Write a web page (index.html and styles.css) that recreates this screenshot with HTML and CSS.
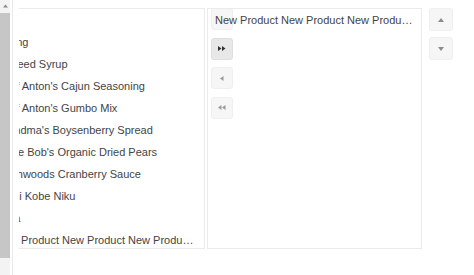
FILE: index.html
```html
<!DOCTYPE html>
<html>
<head>
<meta charset="utf-8">
<link rel="stylesheet" href="styles.css">
</head>
<body>
<div class="page">
  <div class="vscroll">
    <div class="track">
      <div class="arrow-btn"><svg width="5" height="4" viewBox="0 0 5 4"><path d="M2.5 0.5 L5 3.5 L0 3.5 Z" fill="#8a8a8a"/></svg></div>
      <div class="thumb"></div>
    </div>
  </div>

  <div class="panel panel-left">
    <ul class="list list-left">
      <li>Chai</li>
      <li>Chang</li>
      <li>Aniseed Syrup</li>
      <li>Chef Anton's Cajun Seasoning</li>
      <li>Chef Anton's Gumbo Mix</li>
      <li>Grandma's Boysenberry Spread</li>
      <li>Uncle Bob's Organic Dried Pears</li>
      <li>Northwoods Cranberry Sauce</li>
      <li>Mishi Kobe Niku</li>
      <li>Ikura</li>
      <li>New Product New Product New Product New Product</li>
    </ul>
  </div>

  <div class="move-col">
    <button class="btn"></button>
    <button class="btn btn-active"><svg width="8" height="5" viewBox="0 0 8 5"><path d="M0 0 L3.5 2.5 L0 5 Z M4 0 L7.5 2.5 L4 5 Z" fill="#333"/></svg></button>
    <button class="btn"><svg width="4" height="5" viewBox="0 0 4 5"><path d="M3.5 0 L0 2.5 L3.5 5 Z" fill="#9a9a9a"/></svg></button>
    <button class="btn"><svg width="8" height="5" viewBox="0 0 8 5"><path d="M3.5 0 L0 2.5 L3.5 5 Z M7.5 0 L4 2.5 L7.5 5 Z" fill="#9a9a9a"/></svg></button>
  </div>

  <div class="panel panel-right">
    <ul class="list list-right">
      <li>New Product New Product New Product New Product</li>
    </ul>
  </div>

  <div class="order-col">
    <button class="btn btn-order"><svg width="6" height="4" viewBox="0 0 6 4"><path d="M3 0 L6 4 L0 4 Z" fill="#8c8c8c"/></svg></button>
    <button class="btn btn-order"><svg width="6" height="4" viewBox="0 0 6 4"><path d="M0 0 L6 0 L3 4 Z" fill="#8c8c8c"/></svg></button>
  </div>
</div>
</body>
</html>
```
FILE: styles.css
```css
html, body {
  margin: 0;
  padding: 0;
  background: #fff;
}

body {
  font-family: "Liberation Sans", Arial, sans-serif;
  font-size: 11px;
  color: #444;
}

.page {
  display: flex;
  align-items: flex-start;
  height: 275px;
  overflow: hidden;
}

.vscroll {
  align-self: stretch;
  width: 12px;
  border-right: 1px solid #e9e9e9;
  display: flex;
}

.track {
  width: 10px;
  background: #f3f3f3;
  display: flex;
  flex-direction: column;
}

.arrow-btn {
  height: 13px;
  display: flex;
  align-items: center;
  justify-content: center;
  padding-bottom: 1px;
  box-sizing: border-box;
}

.arrow-btn svg {
  display: block;
}

.thumb {
  height: 245px;
  background: #c6c6c6;
}

.panel {
  margin-top: 8px;
  height: 241px;
  box-sizing: border-box;
  border: 1px solid #ebebeb;
  overflow: hidden;
}

.panel-left {
  margin-left: 6px;
  width: 186px;
  border-left: none;
}

.panel-right {
  margin-left: -26px;
  width: 215px;
  background: transparent;
}

.list {
  list-style: none;
  margin: 0;
  padding: 0;
}

.list li {
  height: 22px;
  line-height: 22px;
  white-space: nowrap;
  overflow: hidden;
  text-overflow: ellipsis;
}

.list-left {
  margin-left: -23px;
  margin-right: 9px;
}

.list-right {
  padding: 0 7px;
}

.move-col {
  margin-top: 8px;
  margin-left: 6px;
  width: 22px;
  display: flex;
  flex-direction: column;
  gap: 7.6px;
}

.order-col {
  margin-top: 8px;
  margin-left: 7px;
  width: 24px;
  display: flex;
  flex-direction: column;
  gap: 6px;
}

.btn {
  width: 22px;
  height: 22px;
  padding: 0;
  margin: 0;
  border: 1px solid #efefef;
  border-radius: 3px;
  background: #f6f6f6;
  display: flex;
  align-items: center;
  justify-content: center;
  box-sizing: border-box;
}

.btn svg {
  display: block;
}

.btn-active {
  background: #e8e8e8;
  border-color: #dedede;
}

.btn-order {
  width: 24px;
  height: 23px;
}
```
